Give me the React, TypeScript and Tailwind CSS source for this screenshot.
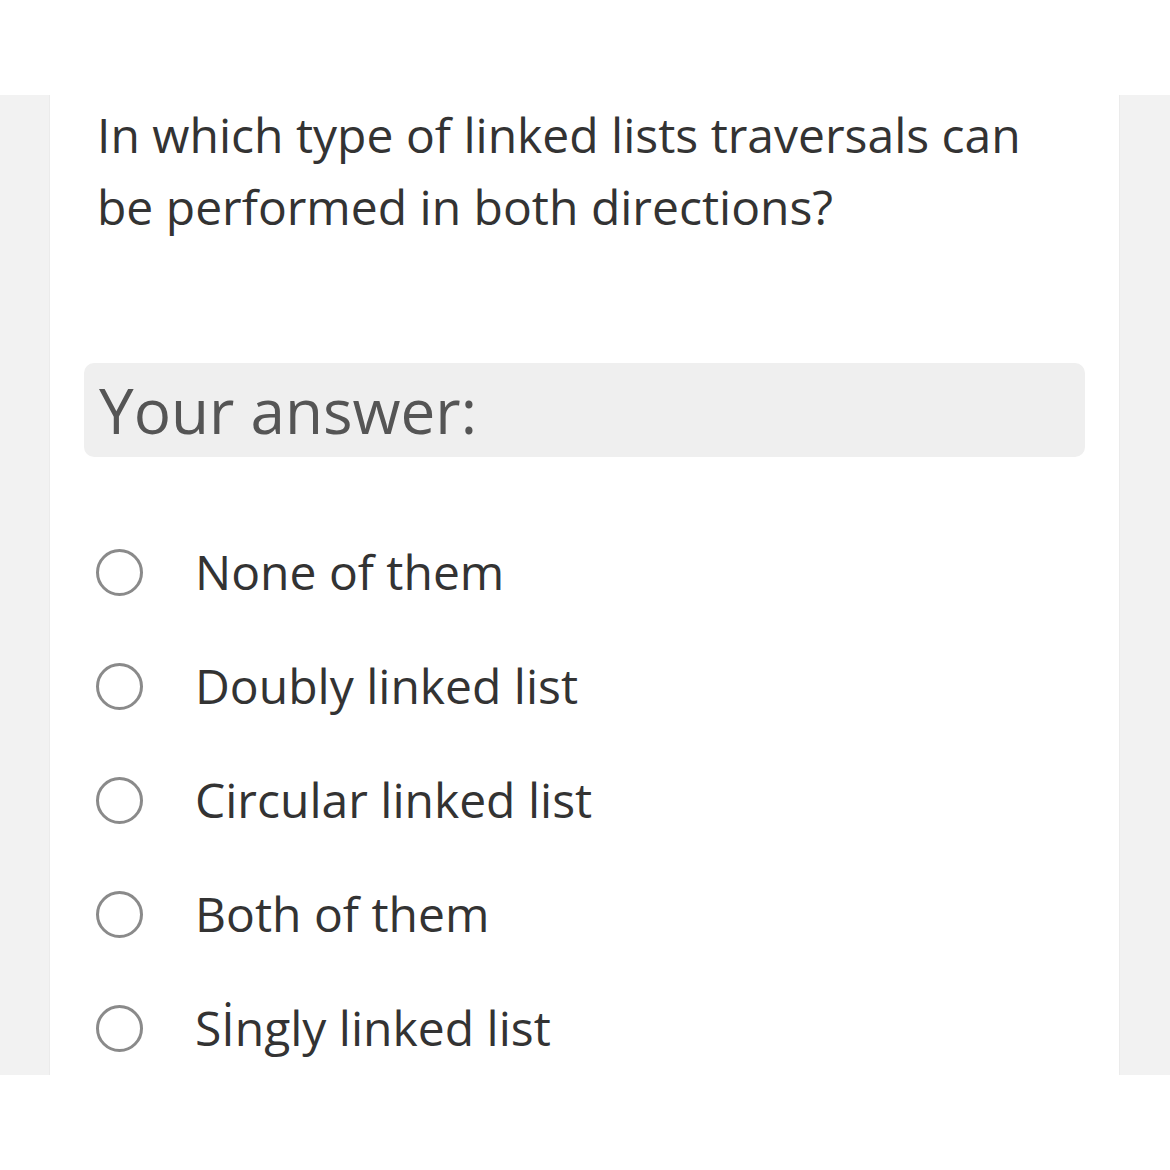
const options = [
  "None of them",
  "Doubly linked list",
  "Circular linked list",
  "Both of them",
  "Sİngly linked list",
];

export default function App() {
  return (
    <div className="w-[1170px] h-[1170px] bg-white overflow-hidden font-['Open_Sans',sans-serif]">
      <div className="h-[95px]" />
      <div className="flex h-[980px]">
        <div className="w-[50px] bg-[#f2f2f2] border-r border-[#ebebeb]" />
        <div className="flex-1 pt-[4px]">
          <p className="pl-[47px] pr-[80px] text-[48px] leading-[72px] text-[#333333]">
            In which type of linked lists traversals can be performed in both directions?
          </p>
          <div className="mt-[120px] mx-[34px] h-[94px] rounded-[10px] bg-[#efefef] pl-[15px] text-[62px] leading-[94px] text-[#555555]">
            Your answer:
          </div>
          <div className="mt-[58px] pl-[46px]">
            {options.map((o) => (
              <label key={o} className="flex items-center h-[114px]">
                <span className="w-[47px] h-[47px] shrink-0 rounded-full border-[3px] border-[#8a8a8a]" />
                <span className="ml-[52px] text-[48px] leading-[114px] text-[#333333]">{o}</span>
              </label>
            ))}
          </div>
        </div>
        <div className="w-[51px] bg-[#f2f2f2] border-l border-[#ebebeb]" />
      </div>
    </div>
  );
}
